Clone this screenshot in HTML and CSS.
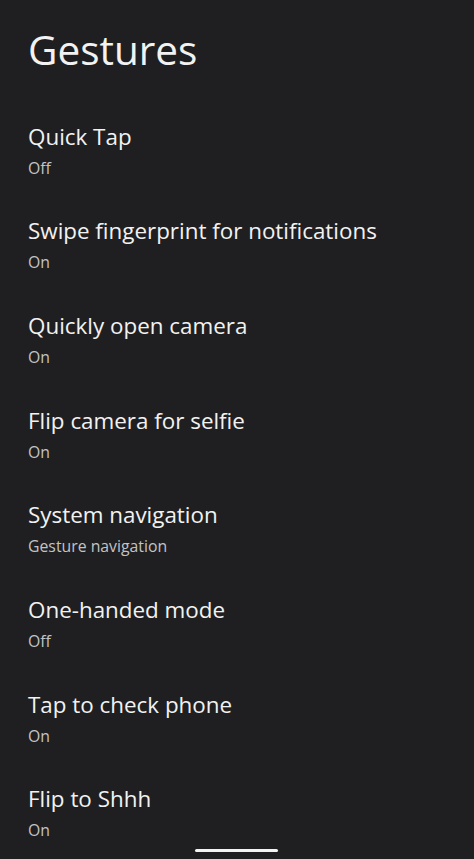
FILE: index.html
```html
<!DOCTYPE html>
<html>
<head>
<meta charset="utf-8">
<link rel="stylesheet" href="styles.css">
</head>
<body>
<div class="screen">
  <h1 class="page-title">Gestures</h1>
  <ul class="list">
    <li class="item"><div class="item-title">Quick Tap</div><div class="item-sub">Off</div></li>
    <li class="item"><div class="item-title">Swipe fingerprint for notifications</div><div class="item-sub">On</div></li>
    <li class="item"><div class="item-title">Quickly open camera</div><div class="item-sub">On</div></li>
    <li class="item"><div class="item-title">Flip camera for selfie</div><div class="item-sub">On</div></li>
    <li class="item"><div class="item-title">System navigation</div><div class="item-sub">Gesture navigation</div></li>
    <li class="item"><div class="item-title">One-handed mode</div><div class="item-sub">Off</div></li>
    <li class="item"><div class="item-title">Tap to check phone</div><div class="item-sub">On</div></li>
    <li class="item"><div class="item-title">Flip to Shhh</div><div class="item-sub">On</div></li>
  </ul>
  <div class="nav-handle"></div>
</div>
</body>
</html>
```
FILE: styles.css
```css
html, body {
  margin: 0;
  padding: 0;
  background: #1f1f21;
}
.screen {
  position: relative;
  width: 474px;
  height: 859px;
  overflow: hidden;
  background: #1f1f21;
  font-family: "Open Sans", "Roboto", sans-serif;
  color: #f2f2f2;
}
.page-title {
  margin: 0;
  padding: 24px 0 0 28px;
  height: 80px;
  box-sizing: border-box;
  font-size: 40.5px;
  font-weight: 400;
  line-height: 52px;
  letter-spacing: 0;
}
.list {
  list-style: none;
  margin: 0;
  padding: 0 0 0 28px;
}
.item {
  height: 94.7px;
  box-sizing: border-box;
  padding-top: 41.5px;
}
.item-title {
  font-size: 22.4px;
  line-height: 30px;
  color: #f2f2f2;
  letter-spacing: 0;
}
.item-sub {
  font-size: 15.8px;
  line-height: 20px;
  color: #c3c3c5;
  margin-top: 6px;
}
.nav-handle {
  position: absolute;
  left: 195px;
  top: 849px;
  width: 83px;
  height: 3px;
  border-radius: 2px;
  background: #f4f4f4;
}
```
